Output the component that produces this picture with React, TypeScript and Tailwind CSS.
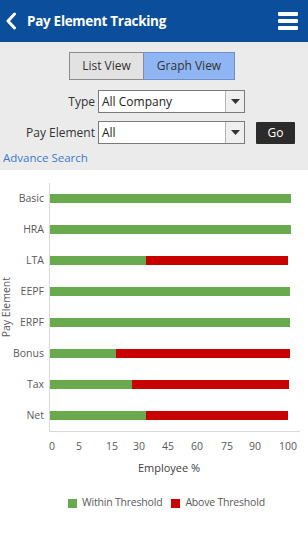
import React from "react";

const bars = [
  { name: "Basic", g: 241, r: 0 },
  { name: "HRA", g: 241, r: 0 },
  { name: "LTA", g: 96, r: 142 },
  { name: "EEPF", g: 240, r: 0 },
  { name: "ERPF", g: 240, r: 0 },
  { name: "Bonus", g: 66, r: 174 },
  { name: "Tax", g: 82, r: 157 },
  { name: "Net", g: 96, r: 142 },
];

const ticks = ["0", "5", "15", "30", "45", "60", "75", "90", "100"];

export default function App() {
  return (
    <div className="w-[308px] h-[543px] bg-white overflow-hidden font-['Open_Sans',sans-serif]">
      {/* Header */}
      <div className="h-[42px] bg-[#0b4e9b] flex items-center">
        <svg width="12" height="18" viewBox="0 0 12 18" className="ml-[5px]">
          <path d="M9.5 2 L3 9 L9.5 16" stroke="white" strokeWidth="3" fill="none" strokeLinecap="round" strokeLinejoin="round" />
        </svg>
        <div className="ml-[10px] text-white font-bold text-[13.5px] tracking-[-0.3px]">Pay Element Tracking</div>
        <div className="ml-auto mr-[10px] flex flex-col gap-[3.5px]">
          <div className="w-[20px] h-[3.5px] bg-white rounded-[1px]" />
          <div className="w-[20px] h-[3.5px] bg-white rounded-[1px]" />
          <div className="w-[20px] h-[3.5px] bg-white rounded-[1px]" />
        </div>
      </div>

      {/* Filter panel */}
      <div className="bg-[#ebebeb] h-[128px] pt-[10px] text-[12px] text-[#333]">
        <div className="flex pl-[69px]">
          <div className="w-[75px] h-[28px] bg-[#e2e2e2] border border-[#8c8c8c] flex items-center justify-center">List View</div>
          <div className="w-[91px] h-[28px] bg-[#8fb6f2] border border-[#6e8fc9] border-l-0 flex items-center justify-center">Graph View</div>
        </div>
        <div className="flex items-center mt-[10px]">
          <div className="w-[95px] text-right">Type</div>
          <div className="ml-[3px] w-[147px] h-[23px] bg-white border border-[#7a7a7a] flex">
            <div className="flex-1 pl-[3px] flex items-center text-[#222]">All Company</div>
            <div className="w-[19px] border-l border-[#b5b5b5] bg-[#efefef] flex items-center justify-center">
              <svg width="9" height="5" viewBox="0 0 9 5"><path d="M0 0 H9 L4.5 5 Z" fill="#333" /></svg>
            </div>
          </div>
        </div>
        <div className="flex items-center mt-[8px]">
          <div className="w-[95px] text-right">Pay Element</div>
          <div className="ml-[3px] w-[147px] h-[23px] bg-white border border-[#7a7a7a] flex">
            <div className="flex-1 pl-[3px] flex items-center text-[#222]">All</div>
            <div className="w-[19px] border-l border-[#b5b5b5] bg-[#efefef] flex items-center justify-center">
              <svg width="9" height="5" viewBox="0 0 9 5"><path d="M0 0 H9 L4.5 5 Z" fill="#333" /></svg>
            </div>
          </div>
          <div className="ml-[11px] w-[39px] h-[22px] bg-[#2b2b2b] rounded-[1px] text-white flex items-center justify-center">Go</div>
        </div>
        <div className="pl-[3px] mt-[5px] text-[#3b78d4] text-[11.5px]">Advance Search</div>
      </div>

      {/* Chart */}
      <div className="flex mt-[13px] text-[10.5px] text-[#595959]">
        <div className="w-[14px] flex items-center justify-center">
          <div className="[writing-mode:vertical-rl] rotate-180 whitespace-nowrap">Pay Element</div>
        </div>
        <div className="w-[35px] flex flex-col pr-[5px]">
          {bars.map((b) => (
            <div key={b.name} className="h-[31px] flex items-center justify-end">{b.name}</div>
          ))}
        </div>
        <div className="w-[251px] border-l border-b border-[#d9d9d9] flex flex-col">
          {bars.map((b) => (
            <div key={b.name} className="h-[31px] flex items-center">
              <div className="h-[9px] bg-[#6aaa4e]" style={{ width: b.g }} />
              {b.r > 0 && <div className="h-[9px] bg-[#c80000]" style={{ width: b.r }} />}
            </div>
          ))}
        </div>
      </div>
      <div className="grid grid-cols-[24px_30px_36px_18px_40px_18px_42px_14px_52px] ml-[40px] mt-[7px] text-[10.5px] text-[#595959] w-[274px]">
        {ticks.map((t) => (
          <div key={t} className="text-center">{t}</div>
        ))}
      </div>
      <div className="mt-[5px] text-center pl-[30px] text-[11px] text-[#404040]">Employee %</div>
      <div className="flex items-center mt-[19px] pl-[68px] text-[10.5px] tracking-[-0.2px] text-[#595959]">
        <div className="w-[9px] h-[9px] bg-[#6aaa4e]" />
        <div className="ml-[5px]">Within Threshold</div>
        <div className="ml-[9px] w-[9px] h-[9px] bg-[#c80000]" />
        <div className="ml-[5px]">Above Threshold</div>
      </div>
    </div>
  );
}
